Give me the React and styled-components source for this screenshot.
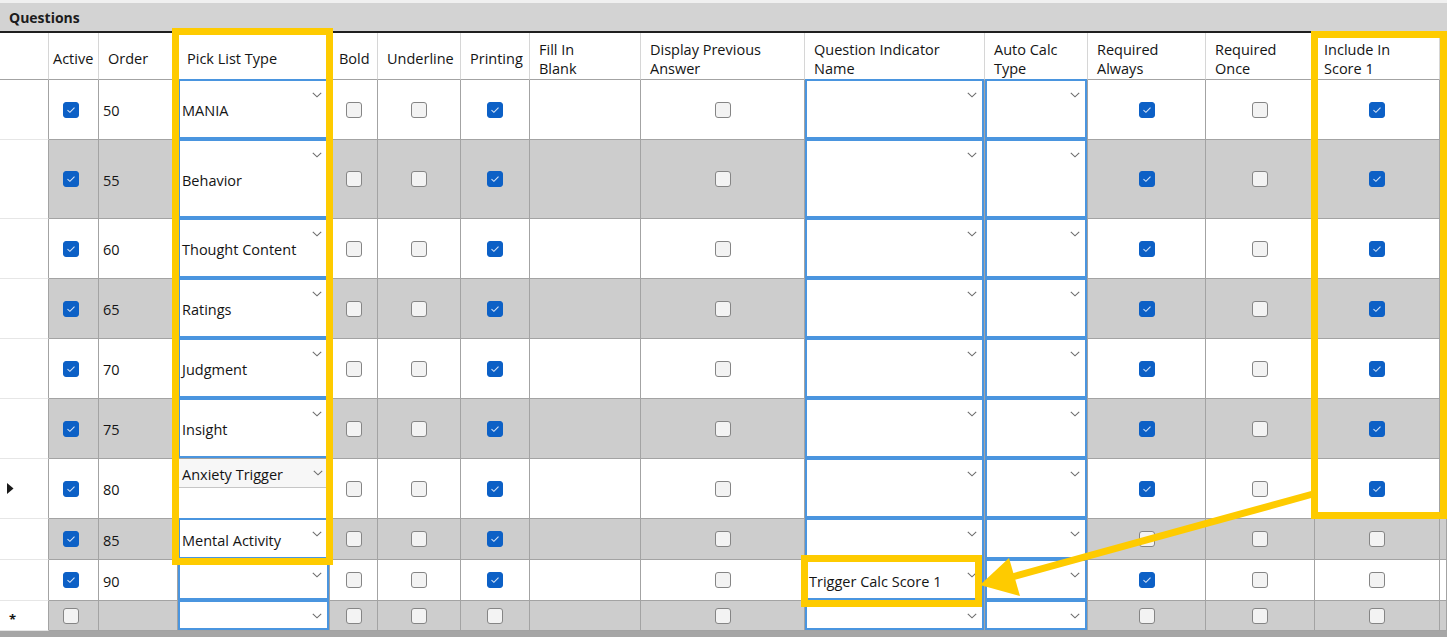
import React from "react";
import styled, { createGlobalStyle } from "styled-components";

const GlobalStyle = createGlobalStyle`
    html, body {
        margin: 0;
        padding: 0;
        overflow: hidden;
        background: #ffffff;
    }
    * {
        box-sizing: border-box;
    }
`

const COLS = "49px 50px 79px 152px 48px 83px 69px 111px 164px 180px 103px 118px 109px 125px 1fr";

const Page = styled.div`
    position: relative;
    width: 100%;
    height: 637px;
    display: flex;
    flex-direction: column;
    font-family: "Open Sans", "Noto Sans", sans-serif;
    font-size: 14.5px;
    color: #141414;
    background: #a6a6a6;
`

const TitleBar = styled.div`
    height: 33px;
    border-top: 3px solid #f0f0f0;
    border-bottom: 2px solid #1f1f1f;
    background: #d3d3d3;
    display: flex;
    align-items: center;
    padding-left: 9px;
    font-weight: 700;
    font-size: 14px;
    color: #1c1c1c;
`

const HeaderRow = styled.div`
    display: grid;
    grid-template-columns: ${COLS};
    height: 47px;
    background: #ffffff;
`

const HeadCell = styled.div`
    display: flex;
    align-items: center;
    padding: 5px 2px 0 ${(p) => p.$pl ?? 9}px;
    line-height: 19px;
    border-right: 1px solid #d6d6d6;
    border-bottom: 1px solid #a3a3a3;
    white-space: pre-line;
    overflow: hidden;
`

const Row = styled.div`
    display: grid;
    grid-template-columns: ${COLS};
    height: ${(p) => p.$h}px;
    background: ${(p) => (p.$gray ? "#cdcdcd" : "#ffffff")};
`

const RowHead = styled.div`
    display: flex;
    align-items: center;
    padding-left: 7px;
    background: #ffffff;
    border-right: 1px solid #a3a3a3;
    border-bottom: 1px solid #e6e6e6;
`

const Cell = styled.div`
    display: flex;
    align-items: center;
    justify-content: ${(p) => (p.$center ? "center" : "flex-start")};
    padding: ${(p) => p.$pt ?? 0}px ${(p) => p.$pr ?? 0}px 0 ${(p) => p.$pl ?? 0}px;
    border-right: 1px solid #a3a3a3;
    border-bottom: 1px solid #a3a3a3;
    min-width: 0;
`

const Combo = styled.div`
    flex: 1;
    align-self: stretch;
    display: flex;
    align-items: center;
    margin: -1px 0 0 0;
    padding: 0 5px 0 2px;
    background: #ffffff;
    border: 2px solid #4a95df;
    white-space: nowrap;
    overflow: hidden;
`

const ComboText = styled.span`
    flex: 1;
    padding-top: 3px;
`

const EditCell = styled.div`
    flex: 1;
    align-self: stretch;
    display: flex;
    flex-direction: column;
    background: #ffffff;
`

const EditCombo = styled.div`
    height: 29px;
    display: flex;
    align-items: center;
    padding: 0 6px 0 4px;
    background: #f7f7f7;
    border-bottom: 1px solid #c6c6c6;
`

const ChevronWrap = styled.span`
    display: flex;
    align-self: ${(p) => (p.$mid ? "center" : "flex-start")};
    margin-top: ${(p) => (p.$mid ? 0 : 11)}px;
`

const Box = styled.span`
    width: 16px;
    height: 16px;
    border-radius: 3px;
    display: flex;
    align-items: center;
    justify-content: center;
    background: ${(p) => (p.$on ? "#0c60c6" : "#f3f3f3")};
    border: 1px solid ${(p) => (p.$on ? "#0c60c6" : "#858585")};
`

const Footer = styled.div`
    flex: 1;
    background: #a6a6a6;
`

const Overlay = styled.svg`
    position: absolute;
    top: 0;
    left: 0;
    pointer-events: none;
`

const Chevron = ({ mid }) => (
    <ChevronWrap $mid={mid}>
        <svg width="10" height="6" viewBox="0 0 10 6">
            <polyline points="0.8,0.8 5,4.8 9.2,0.8" fill="none" stroke="#6d6d6d" strokeWidth="1.1" />
        </svg>
    </ChevronWrap>
);

const Check = ({ on }) => (
    <Box $on={on}>
        {on && (
            <svg width="10" height="8" viewBox="0 0 10 8">
                <polyline points="1.5,4.2 3.9,6.3 8.5,1.6" fill="none" stroke="#d6e4f7" strokeWidth="1.1" />
            </svg>
        )}
    </Box>
);

const headers = [
    { t: "", pl: 0 },
    { t: "Active", pl: 4 },
    { t: "Order" },
    { t: "Pick List Type" },
    { t: "Bold" },
    { t: "Underline" },
    { t: "Printing" },
    { t: "Fill In\nBlank" },
    { t: "Display Previous\nAnswer" },
    { t: "Question Indicator\nName" },
    { t: "Auto Calc\nType" },
    { t: "Required\nAlways" },
    { t: "Required\nOnce" },
    { t: "Include In\nScore 1" },
    { t: "" },
];

const rows = [
    { order: "50", pick: "MANIA", h: 60, gray: false, active: true, print: true, reqA: true, inc: true },
    { order: "55", pick: "Behavior", h: 79, gray: true, active: true, print: true, reqA: true, inc: true },
    { order: "60", pick: "Thought Content", h: 60, gray: false, active: true, print: true, reqA: true, inc: true },
    { order: "65", pick: "Ratings", h: 60, gray: true, active: true, print: true, reqA: true, inc: true },
    { order: "70", pick: "Judgment", h: 60, gray: false, active: true, print: true, reqA: true, inc: true },
    { order: "75", pick: "Insight", h: 60, gray: true, active: true, print: true, reqA: true, inc: true },
    { order: "80", pick: "Anxiety Trigger", h: 60, gray: false, active: true, print: true, reqA: true, inc: true, editing: true, current: true },
    { order: "85", pick: "Mental Activity", h: 41, gray: true, active: true, print: true, reqA: false, inc: false },
    { order: "90", pick: "", h: 41, gray: false, active: true, print: true, reqA: true, inc: false, qin: "Trigger Calc Score 1" },
    { order: "", pick: "", h: 30, gray: true, active: false, print: false, reqA: false, inc: false, fresh: true },
];

const RowMark = ({ current, fresh }) => {
    if (current) {
        return (
            <svg width="7" height="11" viewBox="0 0 7 11">
                <polygon points="0,0 6.5,5.5 0,11" fill="#1a1a1a" />
            </svg>
        );
    }
    if (fresh) {
        return <span style={{ fontSize: "13px", fontWeight: 700, marginLeft: "2px", marginTop: "6px" }}>*</span>;
    }
    return null;
};

const DataRow = ({ r }) => (
    <Row $h={r.h} $gray={r.gray}>
        <RowHead>
            <RowMark current={r.current} fresh={r.fresh} />
        </RowHead>
        <Cell $center $pr={6}>
            <Check on={r.active} />
        </Cell>
        <Cell $pl={4} $pt={2}>{r.order}</Cell>
        <Cell>
            {r.editing ? (
                <EditCell>
                    <EditCombo>
                        <ComboText>{r.pick}</ComboText>
                        <Chevron mid />
                    </EditCombo>
                </EditCell>
            ) : (
                <Combo>
                    <ComboText>{r.pick}</ComboText>
                    <Chevron />
                </Combo>
            )}
        </Cell>
        <Cell $center>
            <Check on={false} />
        </Cell>
        <Cell $center>
            <Check on={false} />
        </Cell>
        <Cell $center>
            <Check on={r.print} />
        </Cell>
        <Cell />
        <Cell $center>
            <Check on={false} />
        </Cell>
        <Cell>
            <Combo>
                <ComboText>{r.qin || ""}</ComboText>
                <Chevron />
            </Combo>
        </Cell>
        <Cell>
            <Combo>
                <ComboText />
                <Chevron />
            </Combo>
        </Cell>
        <Cell $center>
            <Check on={r.reqA} />
        </Cell>
        <Cell $center>
            <Check on={false} />
        </Cell>
        <Cell $center>
            <Check on={r.inc} />
        </Cell>
        <Cell />
    </Row>
);

const Annotations = () => (
    <Overlay width="1447" height="637" viewBox="0 0 1447 637">
        <g fill="none" stroke="#fecb00" strokeWidth="7">
            <rect x="175.5" y="31.5" width="154" height="530" />
            <rect x="1314.5" y="34.5" width="129" height="481" />
            <rect x="804.5" y="558.5" width="174" height="45" />
            <line x1="1313" y1="494" x2="1012" y2="577" />
        </g>
        <polygon points="980,585 1009,558 1020,596" fill="#fecb00" />
    </Overlay>
);

const App = () => {
    return (
        <>
            <GlobalStyle />
            <Page>
                <TitleBar>Questions</TitleBar>
                <HeaderRow>
                    {headers.map((h, i) => (
                        <HeadCell key={i} $pl={h.pl}>
                            {h.t}
                        </HeadCell>
                    ))}
                </HeaderRow>
                {rows.map((r, i) => (
                    <DataRow key={i} r={r} />
                ))}
                <Footer />
                <Annotations />
            </Page>
        </>
    );
};

export default App;
